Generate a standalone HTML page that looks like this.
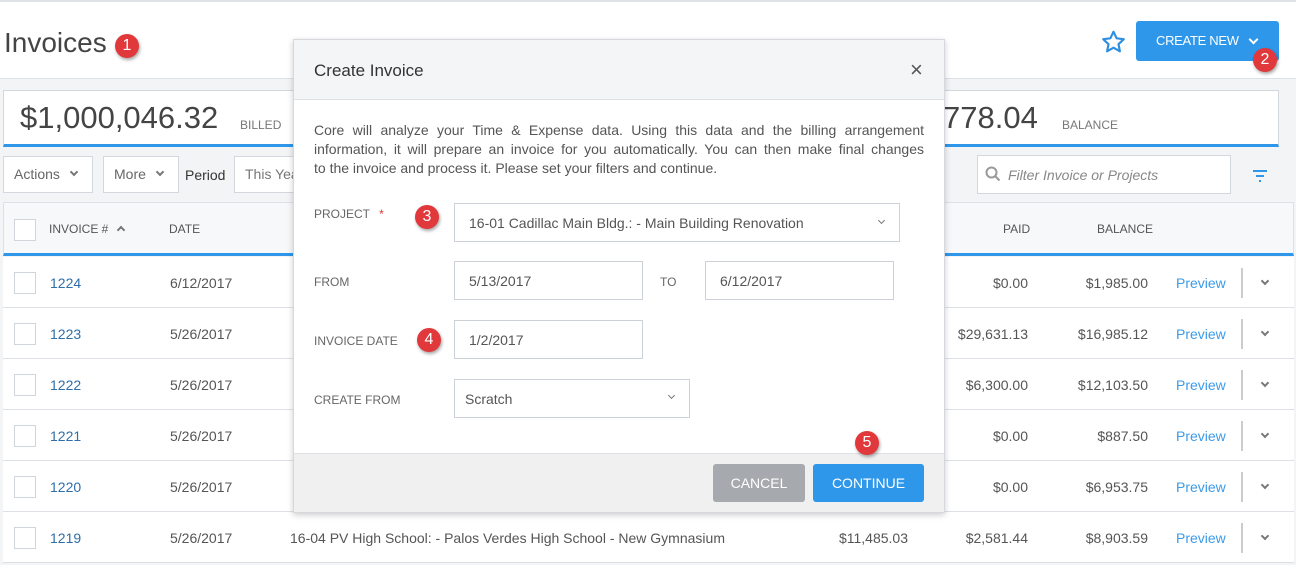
<!DOCTYPE html>
<html><head><style>
*{box-sizing:border-box;margin:0;padding:0}
body{width:1296px;height:565px;overflow:hidden;background:#f3f4f6;font-family:"Liberation Sans",sans-serif;color:#555;position:relative;font-size:14px}
.a{position:absolute}
.badge{position:absolute;width:24px;height:24px;border-radius:50%;background:#e0383b;color:#fff;font-size:16px;text-align:center;line-height:24px;box-shadow:1px 2px 3px rgba(0,0,0,.35)}
.box{position:absolute;background:#fff;border:1px solid #d3d8de}
.cb{position:absolute;left:14px;width:22px;height:22px;border:1px solid #cfd5db;background:#fff}
.row{position:absolute;left:3px;width:1291px;height:51px;background:#fff;border-bottom:1px solid #dde1e6}
.row span{position:absolute;top:18px;font-size:14px;color:#555}
.r{text-align:right}
.pv{color:#3b9be8!important}
.chev{position:absolute;width:7px;height:7px;border-right:2px solid #777;border-bottom:2px solid #777;transform:rotate(45deg)}
.lbl{position:absolute;font-size:12px;color:#666}
.inp{position:absolute;border:1px solid #ccd2d8;background:#fff;font-size:14px;color:#555;padding-left:14px;line-height:38px}
</style></head><body>
<div class="a" style="left:0;top:0;width:1296px;height:79px;background:#fff;border-top:2px solid #dfe3e8;border-bottom:1px solid #dde1e6"></div>
<div class="a" style="left:4px;top:27px;font-size:28px;color:#444">Invoices</div>
<div class="badge" style="left:115px;top:34px">1</div>
<svg class="a" style="left:1100px;top:29px" width="27" height="26" viewBox="0 0 24 24"><path d="M12 2.5l2.9 6.1 6.6.8-4.9 4.6 1.3 6.6L12 17.3l-5.9 3.3 1.3-6.6-4.9-4.6 6.6-.8z" fill="none" stroke="#2e8fe0" stroke-width="2" stroke-linejoin="round"/></svg>
<div class="a" style="left:1136px;top:21px;width:143px;height:40px;background:#2e97ea;border-radius:3px;color:#fff;font-size:13px;letter-spacing:-0.3px;line-height:40px;padding-left:20px">CREATE NEW</div>
<div class="chev" style="left:1250px;top:36px;border-color:#fff"></div>
<div class="badge" style="left:1253px;top:48px">2</div>

<div class="box" style="left:3px;top:90px;width:1276px;height:57px;border-bottom:3px solid #2e97ea"></div>
<div class="a" style="left:20px;top:100px;font-size:31px;color:#444">$1,000,046.32</div>
<div class="a" style="left:240px;top:118px;font-size:12px;color:#777">BILLED</div>
<div class="a" style="left:943px;top:100px;font-size:31px;color:#444">778.04</div>
<div class="a" style="left:1062px;top:118px;font-size:12px;color:#777">BALANCE</div>

<div class="box" style="left:3px;top:156px;width:90px;height:37px"></div>
<div class="a" style="left:14px;top:166px;color:#666">Actions</div><div class="chev" style="left:71px;top:169px;width:6px;height:6px"></div>
<div class="box" style="left:103px;top:156px;width:76px;height:37px"></div>
<div class="a" style="left:114px;top:166px;color:#666">More</div><div class="chev" style="left:157px;top:169px;width:6px;height:6px"></div>
<div class="a" style="left:185px;top:167px;color:#333">Period</div>
<div class="box" style="left:234px;top:156px;width:70px;height:37px"></div>
<div class="a" style="left:245px;top:166px;color:#777">This Yea</div>
<div class="box" style="left:977px;top:155px;width:254px;height:39px"></div>
<svg class="a" style="left:985px;top:166px" width="16" height="16"><circle cx="6.5" cy="6.5" r="5" fill="none" stroke="#999" stroke-width="2"/><path d="M10 10l4.5 4.5" stroke="#999" stroke-width="2"/></svg>
<div class="a" style="left:1008px;top:167px;font-style:italic;color:#888">Filter Invoice or Projects</div>
<svg class="a" style="left:1252px;top:169px" width="16" height="14"><path d="M1 2h14M4 7h8M7 12h2" stroke="#2e97ea" stroke-width="2"/></svg>

<div class="a" style="left:3px;top:202px;width:1291px;height:54px;background:#f7f8f9;border:1px solid #dde1e6;border-bottom:3px solid #2e97ea"></div>
<div class="cb" style="top:219px"></div>
<div class="a" style="left:49px;top:222px;font-size:12px;color:#555">INVOICE #</div>
<div class="chev" style="left:118px;top:227px;transform:rotate(-135deg);width:6px;height:6px"></div>
<div class="a" style="left:169px;top:222px;font-size:12px;color:#555">DATE</div>
<div class="a" style="left:1003px;top:222px;font-size:12px;color:#555">PAID</div>
<div class="a" style="left:1097px;top:222px;font-size:12px;color:#555">BALANCE</div>

<div class="row" style="top:257px"><span style="left:47px;color:#2f6ea8">1224</span><span style="left:167px">6/12/2017</span><span class="r" style="right:266px">$0.00</span><span class="r" style="right:146px">$1,985.00</span><span class="pv" style="left:1173px">Preview</span></div>
<div class="row" style="top:308px"><span style="left:47px;color:#2f6ea8">1223</span><span style="left:167px">5/26/2017</span><span class="r" style="right:266px">$29,631.13</span><span class="r" style="right:146px">$16,985.12</span><span class="pv" style="left:1173px">Preview</span></div>
<div class="row" style="top:359px"><span style="left:47px;color:#2f6ea8">1222</span><span style="left:167px">5/26/2017</span><span class="r" style="right:266px">$6,300.00</span><span class="r" style="right:146px">$12,103.50</span><span class="pv" style="left:1173px">Preview</span></div>
<div class="row" style="top:410px"><span style="left:47px;color:#2f6ea8">1221</span><span style="left:167px">5/26/2017</span><span class="r" style="right:266px">$0.00</span><span class="r" style="right:146px">$887.50</span><span class="pv" style="left:1173px">Preview</span></div>
<div class="row" style="top:461px"><span style="left:47px;color:#2f6ea8">1220</span><span style="left:167px">5/26/2017</span><span class="r" style="right:266px">$0.00</span><span class="r" style="right:146px">$6,953.75</span><span class="pv" style="left:1173px">Preview</span></div>
<div class="row" style="top:512px"><span style="left:47px;color:#2f6ea8">1219</span><span style="left:167px">5/26/2017</span><span style="left:287px">16-04 PV High School: - Palos Verdes High School - New Gymnasium</span><span class="r" style="right:386px">$11,485.03</span><span class="r" style="right:266px">$2,581.44</span><span class="r" style="right:146px">$8,903.59</span><span class="pv" style="left:1173px">Preview</span></div>
<div class="cb" style="top:272px"></div><div class="cb" style="top:323px"></div><div class="cb" style="top:374px"></div><div class="cb" style="top:425px"></div><div class="cb" style="top:476px"></div><div class="cb" style="top:527px"></div>
<div class="a" style="left:1241px;top:268px;width:2px;height:30px;background:#ccc"></div><div class="chev" style="left:1262px;top:278px;width:6px;height:6px"></div>
<div class="a" style="left:1241px;top:319px;width:2px;height:30px;background:#ccc"></div><div class="chev" style="left:1262px;top:329px;width:6px;height:6px"></div>
<div class="a" style="left:1241px;top:370px;width:2px;height:30px;background:#ccc"></div><div class="chev" style="left:1262px;top:380px;width:6px;height:6px"></div>
<div class="a" style="left:1241px;top:421px;width:2px;height:30px;background:#ccc"></div><div class="chev" style="left:1262px;top:431px;width:6px;height:6px"></div>
<div class="a" style="left:1241px;top:472px;width:2px;height:30px;background:#ccc"></div><div class="chev" style="left:1262px;top:482px;width:6px;height:6px"></div>
<div class="a" style="left:1241px;top:523px;width:2px;height:30px;background:#ccc"></div><div class="chev" style="left:1262px;top:533px;width:6px;height:6px"></div>

<!-- modal -->
<div class="a" style="left:293px;top:39px;width:652px;height:474px;background:#fff;border:1px solid #d5d9de;box-shadow:0 2px 6px rgba(0,0,0,.2)">
<div class="a" style="left:0;top:0;width:650px;height:60px;background:#f4f5f6;border-bottom:1px solid #dde1e6"></div>
<div class="a" style="left:20px;top:21px;font-size:17px;color:#333">Create Invoice</div>
<div class="a" style="left:616px;top:17px;font-size:22px;color:#555">×</div>
<div class="a" style="left:20px;top:81px;width:610px;font-size:14px;line-height:19px;color:#555;text-align:justify;text-align-last:justify">Core will analyze your Time &amp; Expense data. Using this data and the billing arrangement information, it will prepare an invoice for you automatically. You can then make final changes</div>
<div class="a" style="left:20px;top:119px;width:610px;font-size:14px;line-height:19px;color:#555">to the invoice and process it. Please set your filters and continue.</div>
<div class="lbl" style="left:20px;top:167px">PROJECT <span style="color:#e03030;margin-left:6px">*</span></div>
<div class="inp" style="left:160px;top:163px;width:446px;height:39px">16-01 Cadillac Main Bldg.: - Main Building Renovation</div>
<div class="chev" style="left:585px;top:178px;width:5px;height:5px;border-width:1px"></div>
<div class="lbl" style="left:20px;top:235px">FROM</div>
<div class="inp" style="left:160px;top:221px;width:189px;height:39px">5/13/2017</div>
<div class="lbl" style="left:366px;top:235px">TO</div>
<div class="inp" style="left:411px;top:221px;width:189px;height:39px">6/12/2017</div>
<div class="lbl" style="left:20px;top:294px">INVOICE DATE</div>
<div class="inp" style="left:160px;top:280px;width:189px;height:39px">1/2/2017</div>
<div class="lbl" style="left:20px;top:353px">CREATE FROM</div>
<div class="inp" style="left:160px;top:339px;width:236px;height:39px;padding-left:10px">Scratch</div>
<div class="chev" style="left:375px;top:353px;width:5px;height:5px;border-width:1px"></div>
<div class="a" style="left:0;top:413px;width:650px;height:59px;background:#f0f0f0;border-top:1px solid #dde1e6"></div>
<div class="a" style="left:419px;top:424px;width:92px;height:38px;background:#a6a9ad;border-radius:3px;color:#fff;text-align:center;line-height:38px">CANCEL</div>
<div class="a" style="left:519px;top:424px;width:111px;height:38px;background:#2e97ea;border-radius:3px;color:#fff;text-align:center;line-height:38px">CONTINUE</div>
</div>
<div class="badge" style="left:415px;top:205px">3</div>
<div class="badge" style="left:417px;top:328px">4</div>
<div class="badge" style="left:855px;top:431px">5</div>
</body></html>
